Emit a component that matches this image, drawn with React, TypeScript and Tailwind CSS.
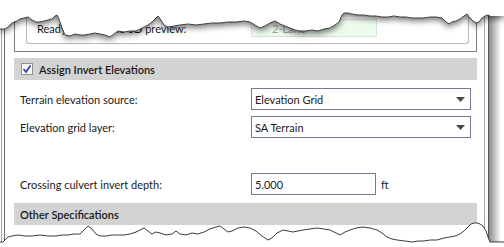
const TOP: [number, number][] = [
  [0, 29], [5, 29], [8, 27], [11, 24], [14, 22], [17, 21], [20, 19], [24, 18], [28, 17], [32, 20], [36, 22], [40, 22], [44, 21], [48, 20], [52, 19], [55, 16], [57, 15], [59, 19], [62, 28], [65, 35], [70, 36], [75, 34], [80, 35], [85, 35], [90, 34], [95, 33], [100, 34], [105, 35], [110, 37], [114, 34], [118, 31], [124, 32], [130, 31], [136, 31], [142, 28], [148, 25], [152, 22], [156, 18], [158, 16], [161, 20], [164, 25], [168, 27], [174, 26], [180, 25], [188, 24], [196, 25], [204, 24], [212, 23], [220, 23], [228, 22], [236, 22], [244, 21], [250, 22], [255, 25], [260, 28], [265, 26], [270, 23], [275, 21], [280, 24], [285, 26], [290, 28], [295, 30], [300, 31], [306, 31], [312, 30], [318, 31], [324, 29], [330, 28], [335, 25], [339, 22], [342, 15], [344, 13], [348, 13], [352, 14], [358, 15], [364, 15], [370, 16], [376, 16], [382, 17], [388, 17], [394, 16], [400, 17], [406, 17], [412, 18], [418, 18], [424, 18], [430, 17], [436, 17], [442, 18], [446, 22], [449, 24], [452, 22], [456, 21], [460, 19], [464, 16], [467, 14], [470, 18], [473, 21], [476, 23], [479, 22], [482, 18], [485, 16], [488, 15], [490, 16],
];

const BOTTOM: [number, number][] = [
  [0, 242], [3, 242], [5, 240], [8, 237], [12, 236], [18, 235], [25, 236], [32, 236], [40, 235], [48, 236], [56, 236], [62, 235], [68, 235], [74, 234], [80, 234], [84, 230], [88, 226], [92, 229], [96, 234], [100, 236], [106, 236], [112, 235], [118, 235], [124, 235], [130, 234], [136, 232], [140, 230], [144, 228], [148, 231], [152, 234], [156, 232], [160, 233], [166, 235], [172, 234], [176, 231], [180, 234], [186, 235], [192, 233], [198, 234], [204, 232], [210, 229], [216, 227], [220, 226], [224, 229], [228, 232], [232, 231], [238, 228], [244, 227], [250, 228], [256, 231], [262, 236], [268, 240], [272, 238], [277, 233], [283, 230], [288, 231], [293, 232], [298, 231], [303, 230], [310, 229], [317, 228], [324, 229], [330, 230], [336, 233], [340, 235], [345, 232], [350, 230], [356, 228], [363, 227], [370, 228], [377, 230], [382, 233], [387, 237], [392, 239], [397, 240], [405, 241], [412, 242], [418, 241], [424, 241], [430, 240], [437, 240], [444, 238], [450, 237], [455, 236], [460, 234], [464, 231], [468, 227], [471, 224], [474, 223], [477, 223], [480, 224], [483, 226], [486, 231], [488, 237], [490, 242], [504, 242],
];

const pts = (a: [number, number][]) => a.map(([x, y]) => `${x},${y}`).join(" L");

function Arrow() {
  return (
    <svg width="9" height="5" viewBox="0 0 9 5" className="shrink-0">
      <path d="M0,0 L9,0 L4.5,5 Z" fill="#4a4a4a" />
    </svg>
  );
}

function Select({ value }: { value: string }) {
  return (
    <div className="flex h-[22px] w-[220px] items-center justify-between border border-[#7b7798] bg-white pl-[3px] pr-[5px]">
      <span>{value}</span>
      <Arrow />
    </div>
  );
}

function Header({ children }: { children: React.ReactNode }) {
  return (
    <div className="flex h-[22px] items-center bg-[#d3d3d3] font-semibold text-[#1a1a1a]">{children}</div>
  );
}

export default function App() {
  return (
    <div className="relative h-[247px] w-[504px] overflow-hidden bg-white font-['Lato',sans-serif] text-[11px] leading-none text-[#1b1b1b]">
      <div className="flex h-full">
        {/* left window frame */}
        <div className="flex w-[6px] shrink-0">
          <div className="w-[1px]" />
          <div className="w-[1px] bg-[#a3a3a3]" />
          <div className="w-[2px]" />
          <div className="w-[1px] bg-[#6e6e6e]" />
        </div>

        {/* main panel */}
        <div className="w-[478px] shrink-0 pl-[8px] pr-[7px]">
          <div className="h-[52px] border-x border-b border-[#7c7c84] pl-[11px] pr-[7px]">
            <div className="h-[44px] rounded-b-[3px] border border-t-0 border-[#b8b8b8] pt-[19px]">
              <div className="flex h-[18px] items-center">
                <div className="w-[224px] pl-[10px]">Ready for possible 3D preview:</div>
                <div className="flex h-[18px] w-[126px] items-center border border-[#d2e8d2] bg-[#eefaee] pl-[20px] text-[#9a9a9a]">
                  2-Lane
                </div>
              </div>
            </div>
          </div>

          <div className="mt-[6px]">
            <Header>
              <div className="ml-[7px] flex h-[12px] w-[12px] items-center justify-center border border-[#8f8f8f] bg-gradient-to-b from-[#f4f4f4] to-white">
                <svg width="10" height="10" viewBox="0 0 10 10">
                  <path d="M1.5,5 L4,8 L8.5,1.5" stroke="#3447a8" strokeWidth="1.8" fill="none" />
                </svg>
              </div>
              <span className="ml-[6px]">Assign Invert Elevations</span>
            </Header>
          </div>

          <div className="mt-[8px] flex items-center">
            <div className="w-[237px] pl-[6px]">Terrain elevation source:</div>
            <Select value="Elevation Grid" />
          </div>
          <div className="mt-[6px] flex items-center">
            <div className="w-[237px] pl-[6px]">Elevation grid layer:</div>
            <Select value="SA Terrain" />
          </div>

          <div className="mt-[35px] flex items-center">
            <div className="w-[237px] pl-[6px]">Crossing culvert invert depth:</div>
            <div className="flex h-[22px] w-[125px] items-center border border-[#7b7798] pl-[3px]">5.000</div>
            <span className="ml-[5px]">ft</span>
          </div>

          <div className="mt-[8px]">
            <Header>
              <span className="pl-[6px]">Other Specifications</span>
            </Header>
          </div>
        </div>

        {/* right window frame + shadow */}
        <div className="flex shrink-0">
          <div className="w-[1px] bg-[#a8a8a8]" />
          <div className="w-[3px]" />
          <div className="w-[1px] bg-[#5a5a5a]" />
          <div className="w-[12px] bg-gradient-to-r from-[#8a8a8a] via-[#c4c4c4] to-white" />
        </div>
      </div>

      {/* torn paper edges */}
      <svg className="pointer-events-none absolute left-0 top-0" width="504" height="247" viewBox="0 0 504 247">
        <defs>
          <filter id="tearShadow" x="-10%" y="-50%" width="120%" height="250%">
            <feDropShadow dx="0" dy="3" stdDeviation="3" floodColor="#000" floodOpacity="0.55" />
          </filter>
        </defs>
        <path d={`M0,0 L504,0 L504,16 L${pts([...TOP].reverse())} Z`} fill="#fff" filter="url(#tearShadow)" />
        <path d={`M${pts(TOP)}`} fill="none" stroke="#3c3c3c" strokeWidth="1" />
        <path d={`M0,247 L${pts(BOTTOM)} L504,247 Z`} fill="#fff" />
        <path d={`M${pts(BOTTOM)}`} fill="none" stroke="#3c3c3c" strokeWidth="1" />
      </svg>
    </div>
  );
}
